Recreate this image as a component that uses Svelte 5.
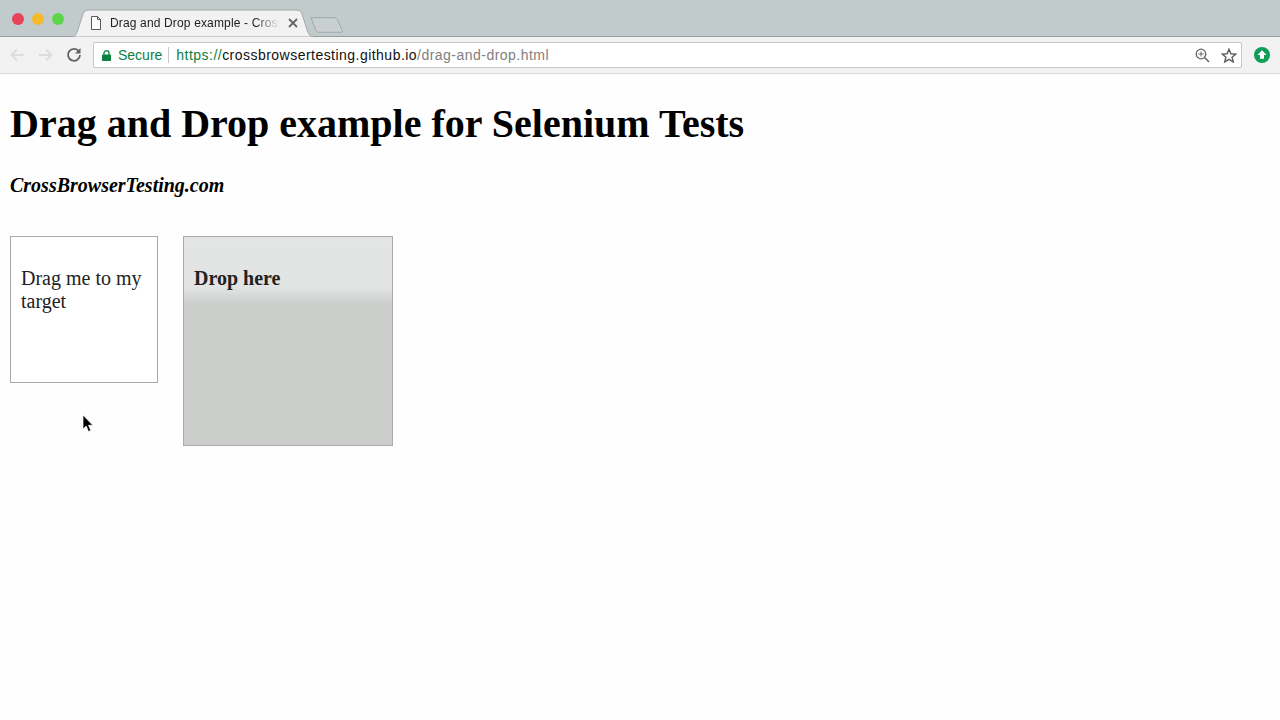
<script>
	const title = 'Drag and Drop example - CrossBrowserTesting';
</script>

<div class="window">
	<div class="tabstrip">
		<div class="lights">
			<span class="light red"></span>
			<span class="light yellow"></span>
			<span class="light green"></span>
		</div>
		<div class="tab">
			<svg class="tab-shape" width="243" height="28" viewBox="0 0 243 28">
				<path d="M0 28 C4 28 5 26 6.500 22 L12 5 C13 2 15 1 18 1 L225 1 C228 1 230 2 231 5 L236.500 22 C238 26 239 28 243 28 Z" fill="#f2f2f2" stroke="#a3a8a8" />
			</svg>
			<svg class="page-icon" width="12" height="14" viewBox="0 0 12 14">
				<path d="M1.500 .5 H7.500 L10.500 3.500 V13.500 H1.500 Z M7.500 .5 V3.500 H10.500" fill="#fff" stroke="#5a5a5a" />
			</svg>
			<span class="tab-title">{title}</span>
			<svg class="tab-close" width="10" height="10" viewBox="0 0 10 10">
				<path d="M1 1 L9 9 M9 1 L1 9" stroke="#666" stroke-width="1.800" />
			</svg>
		</div>
		<svg class="new-tab" width="35" height="18" viewBox="0 0 36 18">
			<path d="M1 1.500 H25 Q27 1.500 28 3.500 L33.500 15 Q34 16.500 32 16.500 H9 Q7 16.500 6 14.500 Z" fill="#c9d0d0" stroke="#a0a7a7" />
		</svg>
	</div>

	<div class="toolbar">
		<svg class="nav" width="16" height="14" viewBox="0 0 16 14">
			<path d="M15 7 H2.500 M8 1.500 L2.500 7 L8 12.500" fill="none" stroke="#dcdddd" stroke-width="2" />
		</svg>
		<svg class="nav" width="16" height="14" viewBox="0 0 16 14">
			<path d="M1 7 H13.500 M8 1.500 L13.500 7 L8 12.500" fill="none" stroke="#dcdddd" stroke-width="2" />
		</svg>
		<svg class="nav reload" width="16" height="16" viewBox="0 0 16 16">
			<path d="M13 4.500 A6 6 0 1 0 14 8" fill="none" stroke="#5f6262" stroke-width="1.800" />
			<path d="M14.500 1 V6.500 H9 Z" fill="#5f6262" />
		</svg>
		<div class="omnibox">
			<svg class="lock" width="9" height="11" viewBox="0 0 9 11">
				<path d="M2 5 V3.200 A2.500 2.500 0 0 1 7 3.200 V5" fill="none" stroke="#0b8043" stroke-width="1.300" />
				<rect x="0" y="4.500" width="9" height="6.500" rx=".8" fill="#0b8043" />
			</svg>
			<span class="secure">Secure</span>
			<span class="divider"></span>
			<span class="url"><span class="scheme">https://</span><span class="host">crossbrowsertesting.github.io</span><span class="path">/drag-and-drop.html</span></span>
			<svg class="zoom-icon" width="15" height="15" viewBox="0 0 15 15">
				<circle cx="6" cy="6" r="4.800" fill="none" stroke="#666" stroke-width="1.300" />
				<path d="M9.500 9.500 L14 14" stroke="#666" stroke-width="1.600" />
				<path d="M3.500 6 H8.500 M6 3.500 V8.500" stroke="#666" />
			</svg>
			<svg class="star" width="16" height="15" viewBox="0 0 16 15">
				<path d="M8 1.300 L9.900 5.700 L14.700 6.100 L11.100 9.200 L12.200 13.900 L8 11.400 L3.800 13.900 L4.900 9.200 L1.300 6.100 L6.100 5.700 Z" fill="none" stroke="#5f6262" stroke-width="1.500" />
			</svg>
		</div>
		<svg class="update" width="16" height="16" viewBox="0 0 16 16">
			<circle cx="8" cy="8" r="8" fill="#0f9d58" />
			<path d="M8 3.200 L12.500 8 H10 V11.800 H6 V8 H3.500 Z" fill="#fff" />
		</svg>
	</div>

	<main>
		<h1>Drag and Drop example for Selenium Tests</h1>
		<h3><em>CrossBrowserTesting.com</em></h3>
		<div class="boxes">
			<div class="draggable">
				<p>Drag me to my target</p>
			</div>
			<div class="droppable">
				<p><b>Drop here</b></p>
			</div>
		</div>
		<svg class="cursor" width="12" height="19" viewBox="0 0 12 19">
			<path d="M1 1 V15 L4.200 12 L6.500 17.500 L8.800 16.500 L6.500 11.300 H10.800 Z" fill="#000" stroke="#fff" stroke-width=".7" />
		</svg>
	</main>
</div>

<style>
	:global(body) {
		background: #fefefe;
		margin: 0;
		overflow: hidden;
	}

	.window {
		display: flex;
		flex-direction: column;
		height: 720px;
		width: 1280px;
	}

	.tabstrip {
		align-items: flex-end;
		background: #c1cbcb;
		border-bottom: 1px solid #999f9f;
		box-sizing: border-box;
		display: flex;
		flex: none;
		height: 37px;
		position: relative;
	}

	.lights {
		align-self: flex-start;
		display: flex;
		gap: 8px;
		margin-left: 12px;
		margin-top: 13px;
		width: 60px;
	}

	.light {
		border-radius: 50%;
		height: 12px;
		width: 12px;
	}

	.red { background: #e8435a; }
	.yellow { background: #f5b92c; }
	.green { background: #5dd548; }

	.tab {
		align-items: center;
		box-sizing: border-box;
		display: flex;
		flex: none;
		height: 28px;
		margin-bottom: -1px;
		margin-left: -1px;
		padding: 0 14px 0 19px;
		position: relative;
		width: 243px;
	}

	.tab-shape {
		left: 0;
		position: absolute;
		top: 0;
	}

	.page-icon {
		flex: none;
		position: relative;
	}

	.tab-title {
		color: #222;
		font-family: "Liberation Sans", Arial, sans-serif;
		font-size: 12px;
		letter-spacing: .15px;
		margin-left: 8px;
		-webkit-mask-image: linear-gradient(90deg, #000 85%, transparent 100%);
		mask-image: linear-gradient(90deg, #000 85%, transparent 100%);
		overflow: hidden;
		position: relative;
		white-space: nowrap;
		width: 170px;
	}

	.tab-close {
		flex: none;
		margin-left: 8px;
		position: relative;
	}

	.new-tab {
		flex: none;
		margin-bottom: 2px;
		margin-left: -4px;
	}

	.toolbar {
		align-items: center;
		background: #f2f2f2;
		border-bottom: 1px solid #dadada;
		box-sizing: border-box;
		display: flex;
		flex: none;
		height: 37px;
		padding-left: 9px;
	}

	.nav {
		flex: none;
		margin-right: 13px;
	}

	.reload {
		margin-right: 11px;
		margin-left: -1px;
	}

	.omnibox {
		align-items: center;
		background: #fff;
		border: 1px solid #c8c8c8;
		border-radius: 2px;
		box-sizing: border-box;
		display: flex;
		font-family: "Liberation Sans", Arial, sans-serif;
		font-size: 14px;
		height: 26px;
		padding: 0 4px 0 8px;
		width: 1149px;
	}

	.secure {
		color: #0b8043;
		margin-left: 7px;
	}

	.divider {
		background: #c8c8c8;
		height: 16px;
		margin: 0 6px 0 6px;
		width: 1px;
	}

	.url {
		flex: 1;
		letter-spacing: .47px;
		margin-left: 1px;
		white-space: nowrap;
	}

	.scheme { color: #0b8043; }
	.host { color: #111; }
	.path { color: #808080; }

	.zoom-icon {
		margin-right: 11px;
	}

	.update {
		flex: none;
		margin-left: 12px;
	}

	main {
		color: #000;
		flex: 1;
		font-family: "Liberation Serif", "Times New Roman", serif;
		font-size: 20px;
		overflow: hidden;
		padding: 0 10px;
		position: relative;
	}

	h1 {
		font-size: 40px;
		font-weight: bold;
		line-height: 46px;
		margin: 27px 0 0;
	}

	h3 {
		font-size: 20px;
		line-height: 23px;
		margin: 27px 0 0;
	}

	.boxes {
		align-items: flex-start;
		display: flex;
		gap: 25px;
		margin-top: 39px;
	}

	.draggable,
	.droppable {
		border: 1px solid #aaa;
		box-sizing: border-box;
		padding: 0 10px;
	}

	.draggable {
		background: #fff;
		color: #222;
		height: 147px;
		width: 148px;
	}

	.droppable {
		background: linear-gradient(180deg, #e3e5e4 0, #e2e4e3 50px, #cbcdcb 68px, #cbcdcb 100%);
		color: #222;
		height: 210px;
		width: 210px;
	}

	p {
		line-height: 23px;
		margin: 30px 0 0;
	}

	.cursor {
		left: 82px;
		position: absolute;
		top: 340px;
	}
</style>
